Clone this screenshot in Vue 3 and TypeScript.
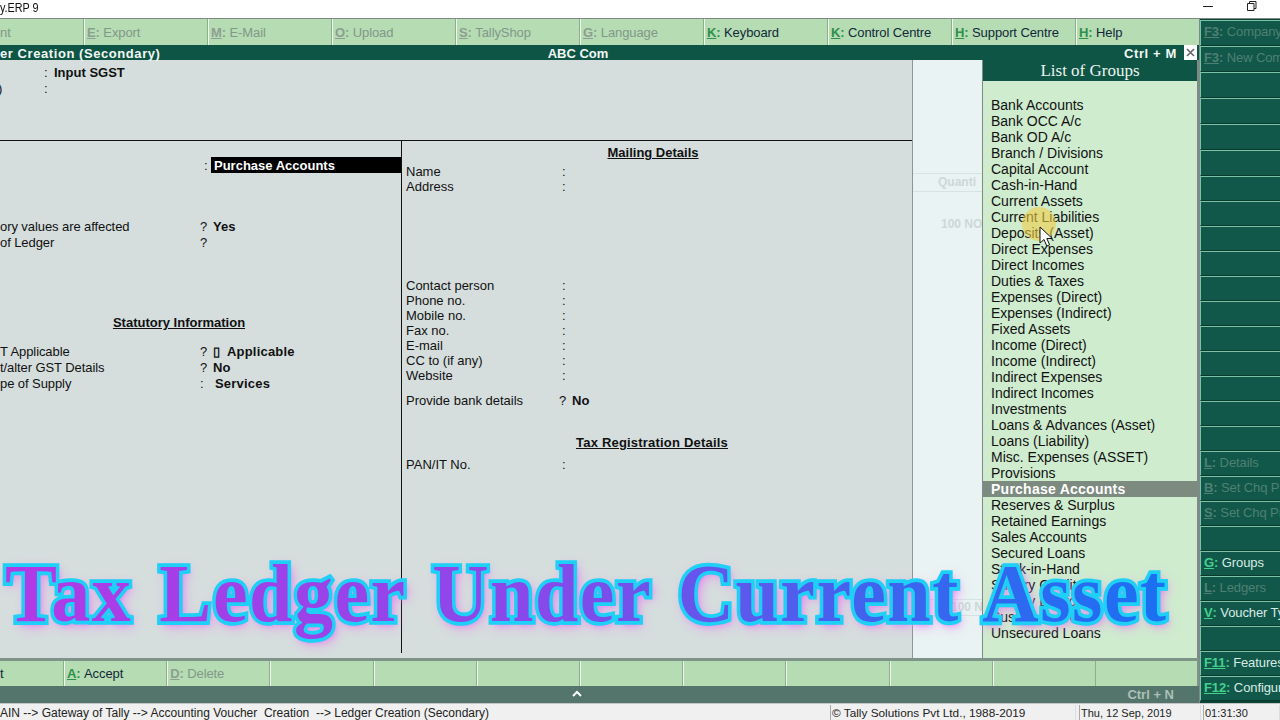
<script setup lang="ts">
interface ToolItem { key: string; label: string; on?: boolean }

const topTools: ToolItem[] = [
  { key: '', label: 'nt' },
  { key: 'E', label: 'Export' },
  { key: 'M', label: 'E-Mail' },
  { key: 'O', label: 'Upload' },
  { key: 'S', label: 'TallyShop' },
  { key: 'G', label: 'Language' },
  { key: 'K', label: 'Keyboard', on: true },
  { key: 'K', label: 'Control Centre', on: true },
  { key: 'H', label: 'Support Centre', on: true },
  { key: 'H', label: 'Help', on: true }
];

const bottomTools: ToolItem[] = [
  { key: '', label: 't', on: true },
  { key: 'A', label: 'Accept', on: true },
  { key: 'D', label: 'Delete' },
  { key: '', label: '' }, { key: '', label: '' }, { key: '', label: '' }, { key: '', label: '' },
  { key: '', label: '' }, { key: '', label: '' }, { key: '', label: '' }, { key: '', label: '' }
];

const e: ToolItem = { key: '', label: '' };
const sideTools: ToolItem[] = [
  { key: 'F3', label: 'Company' },
  { key: 'F3', label: 'New Company' },
  e, e, e, e, e, e, e, e, e, e, e, e, e, e, e,
  { key: 'L', label: 'Details' },
  { key: 'B', label: 'Set Chq Printing' },
  { key: 'S', label: 'Set Chq Printing' },
  e,
  { key: 'G', label: 'Groups', on: true },
  { key: 'L', label: 'Ledgers' },
  { key: 'V', label: 'Voucher Types', on: true },
  e,
  { key: 'F11', label: 'Features', on: true },
  { key: 'F12', label: 'Configure', on: true }
];

const groups = [
  'Bank Accounts', 'Bank OCC A/c', 'Bank OD A/c', 'Branch / Divisions', 'Capital Account',
  'Cash-in-Hand', 'Current Assets', 'Current Liabilities', 'Deposits (Asset)', 'Direct Expenses',
  'Direct Incomes', 'Duties & Taxes', 'Expenses (Direct)', 'Expenses (Indirect)', 'Fixed Assets',
  'Income (Direct)', 'Income (Indirect)', 'Indirect Expenses', 'Indirect Incomes', 'Investments',
  'Loans & Advances (Asset)', 'Loans (Liability)', 'Misc. Expenses (ASSET)', 'Provisions',
  'Purchase Accounts', 'Reserves & Surplus', 'Retained Earnings', 'Sales Accounts', 'Secured Loans',
  'Stock-in-Hand', 'Sundry Creditors', 'Sundry Debtors', 'Suspense A/c', 'Unsecured Loans'
];
const selected = 'Purchase Accounts';

const contactFields = ['Contact person', 'Phone no.', 'Mobile no.', 'Fax no.', 'E-mail', 'CC to (if any)', 'Website'];
const banner = 'Tax Ledger Under Current Asset';
</script>

<template>
  <div class="screen">
    <header class="winbar">
      <span class="wintitle">y.ERP 9</span>
      <div class="winbtns">
        <svg width="12" height="12" viewBox="0 0 12 12"><path d="M1 6.5h10" stroke="#222" fill="none" /></svg>
        <svg width="12" height="12" viewBox="0 0 12 12"><path d="M1.500 3.500h6.500v7h-6.500zM3.500 3.500v-2h6.500v7h-2" stroke="#222" fill="none" /></svg>
      </div>
    </header>

    <div class="middle">
      <div class="workspace">
        <nav class="toptools">
          <div v-for="(t, i) in topTools" :key="i" class="tool" :class="{ on: t.on }">
            <template v-if="t.key"><u class="k">{{ t.key }}</u><b class="k">:</b>&nbsp;</template>{{ t.label }}
          </div>
        </nav>

        <div class="titlebar">
          <span class="t-left">er Creation (Secondary)</span>
          <span class="t-mid">ABC Com</span>
          <span class="t-right">Ctrl + M</span>
          <span class="closebox">
            <svg width="9" height="9" viewBox="0 0 9 9"><path d="M1 1l7 7M8 1l-7 7" stroke="#666" stroke-width="1.600" /></svg>
          </span>
        </div>

        <main class="main">
          <section class="form">
            <div class="head">
              <div class="hrow"><span class="hlabel">:</span><b>Input SGST</b></div>
              <div class="hrow"><span class="clip">)</span><span class="hlabel">:</span></div>
            </div>
            <div class="lower">
              <div class="lcol">
                <div class="lrow first"><span class="lname"></span><span class="sep">:</span><b class="sel">Purchase Accounts</b></div>
                <div class="lrow m45"><span class="lname">ory values are affected</span><span class="sep">?</span><b>Yes</b></div>
                <div class="lrow"><span class="lname">of Ledger</span><span class="sep">?</span></div>
                <h3 class="heading stat">Statutory Information</h3>
                <div class="lrow m13"><span class="lname">T Applicable</span><span class="sep">?</span><b class="wide"><span class="odd">▯</span>Applicable</b></div>
                <div class="lrow"><span class="lname">t/alter GST Details</span><span class="sep">?</span><b>No</b></div>
                <div class="lrow"><span class="lname">pe of Supply</span><span class="sep">:</span><b class="svc wide">Services</b></div>
              </div>
              <div class="rcol">
                <h3 class="heading mail">Mailing Details</h3>
                <div class="rrow m4"><span class="rname">Name</span><span>:</span></div>
                <div class="rrow"><span class="rname">Address</span><span>:</span></div>
                <div v-for="(f, i) in contactFields" :key="f" class="rrow" :class="{ m84: i === 0 }">
                  <span class="rname">{{ f }}</span><span>:</span>
                </div>
                <div class="rrow m10"><span class="rname bank">Provide bank details</span><span class="q">?</span><b>No</b></div>
                <h3 class="heading tax">Tax Registration Details</h3>
                <div class="rrow m7"><span class="rname">PAN/IT No.</span><span>:</span></div>
              </div>
            </div>
          </section>

          <aside class="ghost">
            <div class="g-box g-qty">Quanti</div>
            <div class="g-val">100 NO</div>
            <div class="g-box g-low">100 NOS</div>
          </aside>

          <section class="list">
            <h2 class="list-title">List of Groups</h2>
            <ul class="list-items">
              <li v-for="g in groups" :key="g" :class="{ sel: g === selected }">{{ g }}</li>
            </ul>
          </section>
        </main>

        <nav class="bottools">
          <div v-for="(t, i) in bottomTools" :key="i" class="tool" :class="{ on: t.on }">
            <template v-if="t.key"><u class="k">{{ t.key }}</u><b class="k">:</b>&nbsp;</template>{{ t.label }}
          </div>
        </nav>

        <div class="strip">
          <svg class="caret" width="10" height="7" viewBox="0 0 10 7"><path d="M1 6l4-4 4 4" stroke="#fff" stroke-width="2" fill="none" /></svg>
          <span class="ctrl-n">Ctrl + N</span>
        </div>
      </div>

      <aside class="side">
        <div v-for="(t, i) in sideTools" :key="i" class="sbtn" :class="{ on: t.on, tall: i < 6 }">
          <template v-if="t.key"><u class="sk">{{ t.key }}</u><b class="sk">:</b>&nbsp;{{ t.label }}</template>
        </div>
      </aside>
    </div>

    <footer class="status">
      <div class="st-path">AIN --&gt; Gateway of Tally --&gt; Accounting Voucher&nbsp; Creation&nbsp; --&gt; Ledger Creation (Secondary)</div>
      <div class="st-cell st-copy">© Tally Solutions Pvt Ltd., 1988-2019</div>
      <div class="st-cell st-date">Thu, 12 Sep, 2019</div>
      <div class="st-cell st-time">01:31:30</div>
    </footer>

    <div class="banner" :data-label="banner">{{ banner }}</div>

    <div class="pointer">
      <svg width="16" height="22" viewBox="0 0 16 22"><path d="M1 1v16l4-3.500 2.800 6.500 2.800-1.200-2.800-6.300h5.400z" fill="#fff" stroke="#111" stroke-width="1" /></svg>
    </div>
  </div>
</template>

<style>
html, body { margin: 0; background: #fff; }
</style>

<style scoped>
.screen {
  position: relative;
  width: 1280px;
  height: 720px;
  overflow: hidden;
  display: flex;
  flex-direction: column;
  font-family: "Liberation Sans", Arial, sans-serif;
  font-size: 13px;
  color: #111;
  background: #fff;
}

.winbar {
  height: 18px;
  flex: none;
  display: flex;
  align-items: center;
  justify-content: space-between;
  border-bottom: 1px solid #7d8a85;
  background: #fff;
}
.wintitle { font-size: 12px; transform: scaleX(0.9); transform-origin: left; margin-top: -3px; }
.winbtns { display: flex; gap: 32px; padding-right: 22px; margin-top: -6px; }

.middle { flex: 1; display: flex; min-height: 0; }
.workspace { width: 1199px; flex: none; display: flex; flex-direction: column; }

/* button bars */
.toptools, .bottools { display: flex; flex: none; background: #b5dcb2; overflow: hidden; }
.toptools { height: 26px; }
.bottools { height: 28px; border-top: 3px solid #7f9488; box-sizing: border-box; border-right: 2px solid #7f9488; }
.tool {
  flex: none;
  display: flex;
  align-items: center;
  white-space: pre;
  padding-left: 2px;
  box-sizing: border-box;
  border-left: 1px solid #f0f8ee;
  border-right: 1px solid #8fae8f;
  color: #83978a;
  font-size: 13px;
  letter-spacing: -0.1px;
}
.toptools .tool { width: 124px; }
.toptools .tool:first-child { width: 84px; padding-left: 0; border-left: 0; }
.bottools .tool { width: 103.200px; }
.bottools .tool:first-child { width: 64px; border-left: 0; padding-left: 0; }
.tool .k { color: #8c9f90; font-weight: 700; }
.tool.on { color: #12283a; }
.tool.on .k { color: #2f8f4b; }

.titlebar {
  height: 15px;
  flex: none;
  position: relative;
  display: flex;
  align-items: center;
  padding-top: 1px;
  box-sizing: border-box;
  background: #0f5545;
  color: #f2f7f4;
  font-weight: 700;
  font-size: 13px;
}
.t-left { width: 400px; letter-spacing: 0.57px; }
.t-mid { width: 356px; text-align: center; }
.t-right { margin-left: 368px; letter-spacing: 0.6px; }
.closebox {
  position: absolute;
  right: 2px;
  top: 0;
  width: 13px;
  height: 15px;
  background: #fff;
  display: flex;
  align-items: center;
  justify-content: center;
}

/* main area */
.main { height: 598px; flex: none; display: flex; }
.form {
  width: 913px;
  flex: none;
  box-sizing: border-box;
  border-right: 1px solid #8a9792;
  background: #d5dedd;
  display: flex;
  flex-direction: column;
}
.head { height: 81px; flex: none; box-sizing: border-box; padding-top: 4px; border-bottom: 1px solid #111; }
.hrow { height: 16px; display: flex; align-items: center; position: relative; }
.hlabel { width: 10px; margin-left: 44px; }
.clip { position: absolute; left: -2px; }
.lower { height: 512px; flex: none; display: flex; }
.lcol { width: 402px; flex: none; box-sizing: border-box; border-right: 1px solid #111; }
.rcol { width: 510px; flex: none; box-sizing: border-box; padding-top: 3px; }
.lrow { height: 16px; display: flex; align-items: center; white-space: nowrap; }
.lname { width: 200px; flex: none; letter-spacing: -0.08px; }
.sep { width: 13px; flex: none; }
.first { margin-top: 16px; }
.first .sep { margin-left: 4px; width: 7px; }
.sel { flex: 1; align-self: stretch; display: flex; align-items: center; padding-left: 3px; background: #000; color: #fff; }
.m45 { margin-top: 45px; }
.m13 { margin-top: 13px; }
.odd { display: inline-block; width: 14px; }
.wide { letter-spacing: 0.2px; }
.svc { margin-left: 2px; }
.heading {
  margin: 0;
  height: 16px;
  line-height: 18px;
  font-size: 13px;
  font-weight: 700;
  text-decoration: underline;
  text-align: center;
}
.stat { margin-top: 64px; width: 358px; }
.mail { width: 502px; }
.tax { margin-top: 26px; width: 500px; letter-spacing: 0.2px; }
.rrow { height: 15px; display: flex; align-items: center; padding-left: 4px; white-space: nowrap; }
.rname { width: 156px; flex: none; }
.rname.bank { width: 153px; }
.q { width: 13px; }
.m4 { margin-top: 4px; }
.m7 { margin-top: 7px; }
.m10 { margin-top: 10px; }
.m84 { margin-top: 84px; }

.ghost { width: 69px; flex: none; background: #e9f3f3; overflow: hidden; color: #ccd8d7; font-weight: 700; font-size: 12px; white-space: nowrap; }
.g-box { border-top: 1px solid #d7e2e2; border-bottom: 1px solid #d7e2e2; }
.g-qty { margin-top: 113px; height: 17px; line-height: 17px; padding-left: 25px; }
.g-val { margin-top: 25px; padding-left: 28px; }
.g-low { margin-top: 368px; height: 15px; line-height: 15px; padding-left: 38px; }

.list {
  width: 217px;
  flex: none;
  box-sizing: border-box;
  border-left: 1px solid #7d8a85;
  border-right: 2px solid #7d8a85;
  background: #cfeccf;
}
.list-title {
  margin: 0;
  height: 21px;
  line-height: 21px;
  text-align: center;
  font-family: "Liberation Serif", serif;
  font-weight: 400;
  font-size: 17px;
  color: #eaf3ee;
  background: #0f5545;
}
.list-items { list-style: none; margin: 16px 0 0; padding: 0; }
.list-items li { height: 16px; line-height: 16px; padding-left: 8px; font-size: 14px; color: #111; white-space: nowrap; }
.list-items li.sel { background: #7c8a80; color: #fff; font-weight: 700; letter-spacing: 0.25px; line-height: 17px; }

.strip {
  height: 17px;
  flex: none;
  position: relative;
  display: flex;
  align-items: center;
  justify-content: flex-end;
  padding-right: 25px;
  background: #53756b;
}
.caret { position: absolute; left: 572px; top: 4px; }
.ctrl-n { color: #adc0b8; font-weight: 700; font-size: 13px; }

/* right hand buttons */
.side { width: 81px; flex: none; box-sizing: border-box; padding-top: 1px; background: #0c4437; border-left: 1px solid #7d8a85; overflow: hidden; }
.sbtn {
  height: 25px;
  box-sizing: border-box;
  display: flex;
  align-items: center;
  white-space: pre;
  padding: 0 0 3px 3px;
  font-size: 13px;
  letter-spacing: -0.1px;
  border-top: 1px solid #7cc2a4;
  border-left: 1px solid #7cc2a4;
  border-bottom: 1px solid #083a2e;
  background: #11584a;
  color: #4f8073;
}
.sbtn.tall { height: 26px; }
.sk { color: #4f8073; font-weight: 700; }
.sbtn.on { color: #d8ebe3; }
.sbtn.on .sk { color: #45d08c; }

.status {
  height: 17px;
  flex: none;
  display: flex;
  align-items: center;
  padding-top: 1px;
  background: #f0f0f0;
  border-top: 1px solid #c5c5c5;
  box-sizing: border-box;
  font-size: 12px;
  color: #222;
  white-space: pre;
}
.st-path { width: 830px; flex: none; }
.st-cell { height: 100%; box-sizing: border-box; flex: none; padding-left: 1px; border-left: 1px solid #aaa; border-right: 1px solid #ddd; line-height: 16px; }
.st-copy { width: 246px; font-size: 11.800px; }
.st-date { width: 122px; margin-left: 3px; font-size: 11px; }
.st-time { flex: 1; margin-left: 2px; font-size: 11px; }

/* overlays */
.banner {
  position: absolute;
  left: 5px;
  top: 543px;
  font-family: "Liberation Serif", serif;
  font-weight: 700;
  font-size: 78px;
  line-height: 100px;
  letter-spacing: 1.500px;
  word-spacing: 6px;
  white-space: nowrap;
  transform: scaleY(1.07);
  color: #1fd0f6;
  -webkit-text-stroke: 7px #1fd0f6;
  text-shadow: 3px 4px 12px #e87df0, 2px 3px 6px #e87df0;
}
.banner::after {
  content: attr(data-label);
  position: absolute;
  left: 0;
  top: 0;
  color: transparent;
  -webkit-text-stroke: 0;
  text-shadow: none;
  background: linear-gradient(90deg, #b23ae6 0%, #8a48ea 45%, #3f63ee 75%, #1b70f2 100%);
  -webkit-background-clip: text;
  background-clip: text;
}
.pointer {
  position: absolute;
  left: 1022px;
  top: 207px;
  width: 34px;
  height: 34px;
  border-radius: 50%;
  background: rgba(240, 205, 70, 0.6);
}
.pointer svg { position: absolute; left: 17px; top: 19px; }
</style>
